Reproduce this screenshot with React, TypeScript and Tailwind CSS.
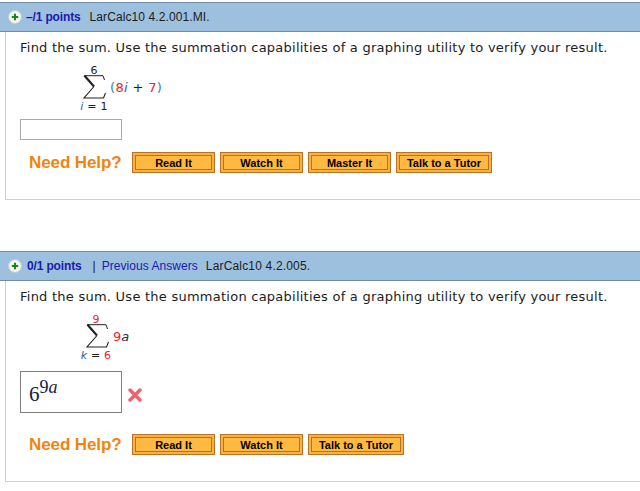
const sans = "font-['Liberation_Sans',Arial,sans-serif]";

function PlusIcon() {
  return (
    <svg width="14" height="14" viewBox="0 0 14 14" className="shrink-0">
      <circle cx="7" cy="7" r="6.5" fill="#f4f4f0" stroke="#c4ccd2" />
      <path d="M7 3.8v6.4M3.8 7h6.4" stroke="#128a1e" strokeWidth="2" />
    </svg>
  );
}

function Header({ children }: { children: React.ReactNode }) {
  return (
    <div className={`flex h-[30px] items-center border-y border-[#6f8ba5] bg-[#9dc0de] pl-[8px] text-[12px] ${sans}`}>
      <PlusIcon />
      {children}
    </div>
  );
}

function HelpButton({ label, width }: { label: string; width: string }) {
  return (
    <div className={`${width} h-[21px] border border-[#b5732a] bg-[#fbb040] p-[2px]`}>
      <div className={`flex h-full items-center justify-center border border-[#b5732a] bg-[#ffb940] pt-[1px] text-[11px] font-bold text-black ${sans}`}>
        {label}
      </div>
    </div>
  );
}

function NeedHelp({ labels, className }: { labels: [string, string][]; className: string }) {
  return (
    <div className={`ml-[23px] flex items-center ${className}`}>
      <span className={`w-[103px] text-[17px] leading-[21px] tracking-[-0.1px] font-bold text-[#ee8510] ${sans}`}>Need Help?</span>
      <div className="flex gap-[5px]">
        {labels.map(([l, w]) => (
          <HelpButton key={l} label={l} width={w} />
        ))}
      </div>
    </div>
  );
}

function Sigma({ className }: { className?: string }) {
  return (
    <svg width="23" height="24" viewBox="0 0 23 24" className={`block ${className ?? ""}`}>
      <path d="M1 0.7H20L21.5 5" fill="none" stroke="#222" strokeWidth="1" />
      <path d="M1.5 0.7L11 11.5" stroke="#222" strokeWidth="2.2" />
      <path d="M11 11.5L1 23H20.5L22.5 18" fill="none" stroke="#222" strokeWidth="1.1" />
    </svg>
  );
}

const prompt = "Find the sum. Use the summation capabilities of a graphing utility to verify your result.";
const promptCls = "ml-[14px] text-[13px] leading-[16px] tracking-[0.245px] text-[#1c1c1c] font-['DejaVu_Sans',sans-serif]";
const mathCls = "text-[11px] leading-[13px] tracking-[0.2px] whitespace-nowrap font-['DejaVu_Sans',sans-serif]";

export default function App() {
  return (
    <div className="h-[491px] w-[640px] overflow-hidden bg-white pt-[2px]">
      <Header>
        <span className="ml-[4px] font-bold tracking-[-0.15px] text-[#1a1ab0]">–/1 points</span>
        <span className="ml-[9px] tracking-[0.1px] text-[#1c1c1c]">LarCalc10 4.2.001.MI.</span>
      </Header>
      <div className="ml-[5px] h-[168px] border-b border-l border-[#cfcfcf] pt-[8px]">
        <p className={promptCls}>{prompt}</p>
        <div className="mt-[8px] ml-[73px] flex items-center">
          <div className={`flex w-[30px] flex-col items-center ${mathCls}`}>
            <span className="text-[#1c1c1c]">6</span>
            <Sigma className="-mt-[2px]" />
            <span className="mt-[1px] text-[#1c1c1c]"><i className="text-[#2a5a9a]">i</i> = 1</span>
          </div>
          <span className="mb-[2px] ml-[1px] text-[13px] tracking-[0.35px] font-['DejaVu_Sans',sans-serif]">
            <span className="text-[#3a7ab0]">(</span>
            <span className="text-[#ee2030]">8</span>
            <i className="text-[#2a5a9a]">i</i>
            <span className="text-[#1c1c1c]"> + </span>
            <span className="text-[#ee2030]">7</span>
            <span className="text-[#3a7ab0]">)</span>
          </span>
        </div>
        <div className="mt-[6px] ml-[14px] h-[21px] w-[102px] border border-[#aaaaaa] bg-white" />
        <NeedHelp
          className="mt-[12px]"
          labels={[["Read It", "w-[83px]"], ["Watch It", "w-[83px]"], ["Master It", "w-[83px]"], ["Talk to a Tutor", "w-[96px]"]]}
        />
      </div>
      <div className="h-[51px]" />
      <Header>
        <span className="ml-[5px] font-bold tracking-[-0.15px] text-[#1a1ab0]">0/1 points</span>
        <span className="ml-[11px] text-[#1c1c1c]">|</span>
        <span className="ml-[6px] tracking-[0.05px] text-[#1a1ab0]">Previous Answers</span>
        <span className="ml-[8px] tracking-[0.17px] text-[#1c1c1c]">LarCalc10 4.2.005.</span>
      </Header>
      <div className="ml-[5px] h-[201px] border-b border-l border-[#cfcfcf] pt-[8px]">
        <p className={promptCls}>{prompt}</p>
        <div className="mt-[8px] ml-[75px] flex items-center">
          <div className={`flex w-[30px] flex-col items-center ${mathCls}`}>
            <span className="text-[#ee2030]">9</span>
            <Sigma className="-mt-[2px] ml-[2px]" />
            <span className="mt-[1px] text-[#1c1c1c]"><i className="text-[#2a5a9a]">k</i> = <span className="text-[#ee2030]">6</span></span>
          </div>
          <span className="mb-[2px] ml-[2px] text-[13px] font-['DejaVu_Sans',sans-serif]">
            <span className="text-[#ee2030]">9</span>
            <i className="text-[#1c2c50]">a</i>
          </span>
        </div>
        <div className="mt-[9px] ml-[14px] flex items-center">
          <div className="h-[42px] w-[102px] border border-[#808080] bg-white pt-[7px] pl-[8px] font-['Liberation_Serif',serif] text-[#14233f]">
            <span className="text-[21px] leading-[30px]">6</span>
            <span className="relative top-[-8px] text-[18px] leading-[16px]">9<i>a</i></span>
          </div>
          <svg width="14" height="14" viewBox="0 0 14 14" className="mt-[5px] ml-[6px]">
            <path d="M2 2L12 12M12 2L2 12" stroke="#f0606a" strokeWidth="3.4" strokeLinecap="round" />
          </svg>
        </div>
        <NeedHelp
          className="mt-[21px]"
          labels={[["Read It", "w-[83px]"], ["Watch It", "w-[83px]"], ["Talk to a Tutor", "w-[96px]"]]}
        />
      </div>
    </div>
  );
}
